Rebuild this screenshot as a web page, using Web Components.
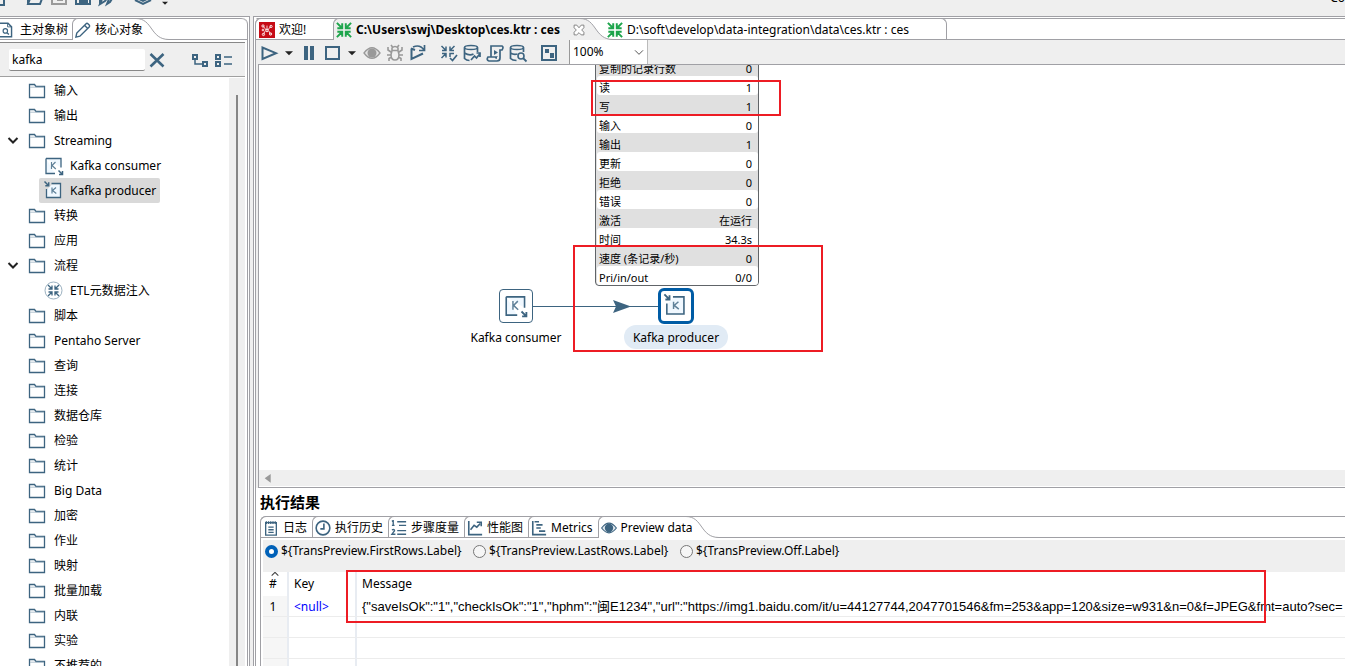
<!DOCTYPE html>
<html lang="zh-CN">
<head>
<meta charset="utf-8">
<title>Spoon - ces</title>
<style>
  html, body { margin: 0; height: 100%; overflow: hidden; }
  body {
    font: 12px/16px "Noto Sans", "Noto Sans CJK SC", sans-serif;
    color: #000;
    background: #efefef;
    --line: #a0a0a5;
    --face: #efefef;
    --ink: #3d6480;
    --mark: #ed1c24;
  }
</style>
</head>
<body>
<spoon-app></spoon-app>
<script>
const define = (name, html, setup) => {
  const template = document.createElement('template');
  template.innerHTML = '<style>*{box-sizing:border-box}:host([hidden]){display:none}</style>' + html;
  customElements.define(name, class extends HTMLElement {
    connectedCallback() {
      if (this.shadowRoot) return;
      const root = this.attachShadow({ mode: 'open' });
      root.append(template.content.cloneNode(true));
      if (setup) setup(this, root);
    }
  });
};

/* ---------- icons ---------- */
const K = (inner) => `<g fill="none" stroke="#3d6480">${inner}</g>`;
const ICONS = {
  file: K('<path stroke-width="2" d="M2 1h10v16H2z"/>'),
  open: K('<path stroke-width="2" d="M2 16V3h5l2 3h6M2 16l3-8h12l-3 8z"/>'),
  saveas: '<g fill="none" stroke="#9a9a9a" stroke-width="2"><path d="M2 2h14v14H2z"/><path d="M7 7h6M7 12h6"/></g>',
  save: K('<path stroke-width="2" d="M2 2h14v14H2z"/><path stroke-width="4" d="M5 13h8M12 12v5"/>'),
  edit: K('<path stroke-width="2" d="M2 16V5h4M2 16l2-5 7-9 3 2-7 9zM9 16l2-5 5-7 1 2-5 8z"/>'),
  layers: K('<path stroke-width="2" d="M1 12l8 4 8-4M1 9l8 4 8-4"/>'),
  folder: '<path d="M1.500 2.500h5l1.500 2h8.500v11h-15z" fill="#fff" stroke="#3d6480" stroke-width="1.300"/><path d="M2 5.200h14" stroke="#9db3c2" stroke-width=".8"/>',
  chevron: '<path d="M4.500 6l4.500 4.500L13.500 6" fill="none" stroke="#222" stroke-width="2"/>',
  consumer: '<path d="M1 1.500h15v9M10 16.500H1v-15" fill="#f0f8ff" stroke="#3d6480" stroke-width="1.300"/><path d="M6.500 5v7M10.500 5L7 8.500l3.800 3.500" fill="none" stroke="#5f8199" stroke-width="1.200"/><path d="M13.500 13.500l4 4M14 17.500h3.500V14" fill="none" stroke="#3d6480" stroke-width="1.500"/>',
  producer: '<path d="M7 2.500h8.500v13h-14V8z" fill="#f0f8ff"/><path d="M6.500 1.500h9v14h-14V7" fill="none" stroke="#3d6480" stroke-width="1.300"/><path d="M7 5.500v6M11 5.500L7.500 8.500l3.800 3" fill="none" stroke="#5f8199" stroke-width="1.200"/><path d="M-.5-.5l4.200 4.200M.3 3.700h3.400V.3" fill="none" stroke="#3d6480" stroke-width="1.500"/>',
  inject: '<circle cx="8.500" cy="8.500" r="8.500" fill="none" stroke="#8fa7b8" stroke-width=".9"/><path d="M3 3l4 4M7 3.500V7H3.500M14 3l-4 4M10 3.500V7h3.500M3 14l4-4M3.500 10H7v3.500M14 14l-4-4M13.500 10H10v3.500" fill="none" stroke="#3d6480" stroke-width="1.300"/>',
  objtree: K('<path stroke-width="1.600" d="M0 1.500h9l4 4v11H0"/><path d="M8.500 1.500v4H13"/><circle cx="6" cy="10" r="2.500" stroke-width="1.300"/><path stroke-width="1.500" d="M8 12l2 2"/>'),
  pencil: K('<path stroke-width="1.600" d="M1 17l1-4.600L12.500 2q1-1 2 0l1.500 1.500q1 1 0 2L5.500 16zM11 4l3.500 3.500"/>'),
  clear: K('<path stroke-width="2.600" d="M2.500 3l13 12.500M15.500 3L2.500 15.500"/>'),
  expand: K('<path stroke-width="2" d="M2 4h4v4H2zM12 11h4v4h-4z"/><path stroke-width="1.500" d="M4 9v4h7"/>'),
  collapse: K('<path stroke-width="2" d="M2 4h4v4H2zM2 11h4v4H2z"/><path stroke-width="1.500" d="M10 6h8M10 13h8"/>'),
  welcome: '<rect x="0" y="0" width="18" height="18" fill="#c60c16"/><g fill="none" stroke="#fff"><path d="M5 5l3 4M13 5l-3 4M7 10l-2 4M11 10l2 4M8 9h2M9 4v4" stroke-width=".9"/><circle cx="4.500" cy="4.500" r="1.300"/><circle cx="13.500" cy="5" r="1.300"/><circle cx="4.500" cy="9" r="1"/><circle cx="5" cy="14" r="1.300"/><circle cx="13" cy="13.500" r="1.300"/><circle cx="9" cy="9.500" r="1.500"/></g>',
  trans: '<g fill="none" stroke="#1ea54c" stroke-width="2.200"><path d="M1 1l6 6M7 1.500V7H1.500M17 1l-6 6M11 1.500V7h5.500M1 17l6-6M1.500 11H7v5.500M17 17l-6-6M16.500 11H11v5.500"/></g>',
  close: '<path d="M3.500 3.500h3L9 6.500l2.500-3h3v3L12 9l2.500 2.500v3h-3L9 12l-2.500 2.500h-3v-3L6 9 3.500 6.500z" fill="#fff" stroke="#777" stroke-width="1"/>',
  play: '<path d="M2.500 3.500v11.500L16 9.200z" fill="none" stroke="#3d6480" stroke-width="2"/>',
  caret: '<path d="M0 5h18L9 14z" fill="#222"/>',
  pause: '<path d="M4 2h4v14H4zM10 2h4v14h-4z" fill="#3d6480"/>',
  stop: K('<path stroke-width="2" d="M3 3h13v12H3z"/>'),
  preview: '<path d="M1 9Q9-1.500 17 9 9 19.500 1 9z" fill="#e5e5e5" stroke="#999" stroke-width="1.300"/><circle cx="9" cy="9" r="4.500" fill="#999"/>',
  bug: '<g fill="none" stroke="#999" stroke-width="1.600"><path d="M6 6.500h6l1 4q0 5.500-4 5.500t-4-5.500zM6 6V4q3-3 6 0v2M5 8L2 6V3M13 8l3-2V3M5 11H1M13 11h4M5.500 13L3 14.500V17M12.500 13l2.500 1.500V17M5 1l1.500 2M13 1l-1.500 2"/></g>',
  replay: K('<path stroke-width="2" d="M2.500 4.500V15L14 9.500M2 4.500l4 1.500"/><path stroke-width="1.700" d="M4 3q7-3 11 3M15.500 1v5.500H10"/>'),
  verify: K('<path stroke-width="1.500" d="M1.500 2L6 6.500M6 2.500v4H2M14.500 2L10 6.500M10 2.500v4h4M1.500 14L6 9.500M2 9.500h4v4M10 13V9.500h4"/><path stroke-width="1.700" d="M10 14l2.500 2.500L17 11"/>'),
  dbimpact: K('<ellipse cx="8" cy="3.500" rx="6.500" ry="2" stroke-width="1.500"/><path stroke-width="1.700" d="M1.500 3.500v11q2 2 5 2M14.500 3.500V8M1.500 9q5 3 9 1"/><path stroke-width="1.700" d="M8 16l3.500-4 2 2 4-5M13.500 9H17v4"/>'),
  sql: K('<path stroke-width="1.700" d="M5 2h11q2 1 0 4h-2v8q0 3-3 3H3q-3-1-1-4h3zM11 14q-2 0-1-1H5"/><path fill="#3d6480" stroke="none" d="M8 6v5l4-2.500z"/>'),
  dbsearch: K('<ellipse cx="8" cy="3.500" rx="6.500" ry="2" stroke-width="1.500"/><path stroke-width="1.700" d="M1.500 3.500v11q2 2 6 2M14.500 3.500V8M1.500 9q3 2 7 1"/><circle cx="12" cy="12" r="3" stroke-width="1.600"/><path stroke-width="1.800" d="M14 14l3.500 3.500"/>'),
  grid: K('<path stroke-width="2" d="M2 2h14v14H2z"/>') + '<path d="M5 5h4v4H5zM10 9h4v5h-4z" fill="#3d6480"/>',
  log: K('<path stroke-width="1.500" d="M3 3h12v14H3zM6 8h6M6 11h6M6 14h6"/><path stroke-width="3" stroke-dasharray="1.500 1" d="M3 3h12"/>'),
  clock: K('<circle cx="9" cy="9" r="7.700" stroke-width="1.800"/><path stroke-width="1.800" d="M10 4v6H6"/>'),
  steps: K('<path stroke-width="1.500" d="M7 2h10M9 6h8M7 12h10M7 16h10M2.500 0v6M1 1.500L2.500.5M1 6h3M1 11q3-1 3 1l-3 4h4"/>'),
  chart: K('<path stroke-width="1.800" d="M2 1v15.500h15M4 11l4-5 3 2 4-4"/><path stroke-width="1.800" d="M11 2.500h5V7"/>'),
  metrics: K('<path stroke-width="1.800" d="M2 1v15.500h15M4 2h5M6 5.500h7M6 9h5M9 12.500h7"/>'),
  eye: '<path d="M.7 9Q9-2 17.300 9 9 20 .7 9z" fill="#dfe8ee" stroke="#3d6480" stroke-width="1.300"/><circle cx="9" cy="9" r="4.700" fill="#3d6480"/>',
  down: '<path d="M3 6.500l6 6 6-6" fill="none" stroke="#555" stroke-width="1.500"/>',
  left: '<path d="M13 3v13L4 9.500z" fill="#999"/>',
  sortup: '<path d="M3 12l6-6 6 6" fill="none" stroke="#444" stroke-width="2"/>'
};
define('ui-icon', `<style>
  :host { display: block; flex: none; width: var(--size, 18px); height: var(--size, 18px); }
  svg { display: block; width: 100%; height: 100%; overflow: visible; }
</style><svg viewBox="0 0 18 18" aria-hidden="true"></svg>`,
(host, root) => { root.querySelector('svg').innerHTML = ICONS[host.getAttribute('name')]; });

/* ---------- tabs ---------- */
define('tab-strip', `<style>
  :host { display: flex; height: 22px; background: #fff; border-top: 1px solid var(--line);
    box-shadow: inset 0 -1px var(--line); border-left: var(--strip-left, 1px solid var(--line)); border-top-left-radius: 6px; }
</style><slot></slot>`);

define('ui-tab', `<style>
  :host { display: flex; flex: none; position: relative; }
  button { display: flex; align-items: center; gap: 4px; width: 100%; height: 22px; margin: -1px 0 0; padding: 0 5px 0 2px;
    font: inherit; color: inherit; white-space: nowrap; text-align: left; background: none; border: 0;
    border-top: 1px solid var(--line); border-left: 1px solid var(--line); border-top-left-radius: 6px; --size: 16px; }
  :host([plain]) button { border-left-color: transparent; border-radius: 0; }
  :host([flush]) button { border-left: 0; padding: 0 4px 0 0; border-radius: 0; }
  :host([last]) button { border-right: 1px solid var(--line); border-radius: 0 6px 0 0; }
  :host([bold]) button { font-weight: bold; }
  :host([selected]) button { background: var(--tab-face, #fff); padding-right: 0; }
  svg { display: none; flex: none; width: 33px; height: 21px; margin-left: -7px; }
  :host([selected]) svg { display: block; }
  span, .x { position: relative; z-index: 1; }
  .x { margin-left: auto; }
</style>
<button role="tab"><ui-icon></ui-icon><span><slot></slot></span></button>
<svg viewBox="0 0 33 21" aria-hidden="true"><path d="M0 0C17 0 14 20.500 33 20.500V21H0z" fill="var(--tab-face,#fff)"/><path d="M0 -.5C17 -.5 14 20.500 33 20.500" fill="none" stroke="#a0a0a5"/></svg>`,
(host, root) => {
  const icon = root.querySelector('ui-icon'), fresh = document.createElement('ui-icon');
  fresh.setAttribute('name', host.getAttribute('icon'));
  icon.replaceWith(fresh);
  const button = root.querySelector('button');
  button.setAttribute('aria-selected', host.hasAttribute('selected'));
  if (host.hasAttribute('closable')) {
    const x = document.createElement('ui-icon');
    x.setAttribute('name', 'close'); x.className = 'x';
    button.append(x);
  }
});

/* ---------- main toolbar ---------- */
define('main-toolbar', `<style>
  :host { display: flex; align-items: flex-end; gap: 6px; height: 16px; padding: 0 0 10px; overflow: hidden; background: var(--face); }
  button { flex: none; padding: 0; border: 0; background: none; }
  .file { margin-left: -8px; } .open { margin-left: 10px; } .layers { margin-left: 12px; }
  .drop { --size: 6px; margin-left: 4px; }
  .connect { margin-left: auto; font: inherit; line-height: 16px; }
</style>
<button class="file" aria-label="新建"><ui-icon name="file"></ui-icon></button>
<button class="open" aria-label="打开"><ui-icon name="open"></ui-icon></button>
<button aria-label="浏览"><ui-icon name="saveas"></ui-icon></button>
<button aria-label="保存"><ui-icon name="save"></ui-icon></button>
<button aria-label="另存为"><ui-icon name="edit"></ui-icon></button>
<button class="layers" aria-label="透视图"><ui-icon name="layers"></ui-icon></button>
<button class="drop" aria-label="更多"><ui-icon name="caret"></ui-icon></button>
<button class="connect">Co</button>`);

/* ---------- object explorer ---------- */
define('tree-item', `<style>
  :host { display: flex; align-items: center; height: 25px; padding-left: 4px; white-space: nowrap; }
  .arrow { width: 18px; margin-right: 6px; }
  .row { display: flex; align-items: center; gap: 8px; height: 25px; padding: 0 4px 0 0; border-radius: 2px; }
  :host([child]) .row { margin-left: 11px; gap: 7px; padding-left: 6px; }
  :host([selected]) .row { background: #d9d9d9; }
</style><span class="arrow"></span><span class="row"><slot></slot></span>`,
(host, root) => {
  const icon = document.createElement('ui-icon');
  icon.setAttribute('name', host.getAttribute('icon') || 'folder');
  root.querySelector('.row').prepend(icon);
  host.setAttribute('role', 'treeitem');
  if (host.hasAttribute('open')) {
    const arrow = document.createElement('ui-icon');
    arrow.setAttribute('name', 'chevron');
    root.querySelector('.arrow').append(arrow);
  }
});

define('object-explorer', `<style>
  :host { display: flex; flex-direction: column; flex: none; width: 250px; background: #fff; padding-top: 1px;
    border-top: 1px solid var(--line); border-right: 1px solid var(--line); --strip-left: 0; min-height: 0; }
  .inner { display: flex; flex-direction: column; flex: 1; min-height: 0; margin-right: 1px; border-right: 1px solid var(--line); border-top-right-radius: 6px; padding-right: 2px; }
  tab-strip { border-radius: 0 6px 0 0; margin-right: -2px; }
  .search { display: flex; align-items: center; flex: none; height: 35px; margin-top: 2px; padding: 0 13px 0 9px; background: var(--face);
    border-top: 1px solid #888; border-bottom: 1px solid #a0a0a0; }
  input { width: 136px; height: 22px; padding: 0 3px; font: inherit; border: 0; border-bottom: 1px solid #888; border-radius: 2px; background: #fff; outline: 0; }
  button { padding: 0; border: 0; background: none; }
  .clear { margin: 0 auto 0 3px; } .collapse { margin-left: 5px; }
  .body { display: flex; flex: 1; min-height: 0; overflow: hidden; padding-top: 1px; }
  .tree { flex: 1; }
  .bar { width: 16px; padding: 17px 0 0 7px; background: var(--face); }
  .thumb { width: 2px; height: 100%; background: #868686; }
</style>
<div class="inner">
<tab-strip role="tablist"><ui-tab icon="objtree" flush>主对象树</ui-tab><ui-tab icon="pencil" selected>核心对象</ui-tab></tab-strip>
<div class="search">
  <input type="text" value="kafka" aria-label="步骤">
  <button class="clear" aria-label="清除"><ui-icon name="clear"></ui-icon></button>
  <button aria-label="展开全部"><ui-icon name="expand"></ui-icon></button>
  <button class="collapse" aria-label="收起全部"><ui-icon name="collapse"></ui-icon></button>
</div>
<div class="body">
  <div class="tree" role="tree">
    <tree-item>输入</tree-item><tree-item>输出</tree-item>
    <tree-item open>Streaming</tree-item>
    <tree-item child icon="consumer">Kafka consumer</tree-item>
    <tree-item child selected icon="producer">Kafka producer</tree-item>
    <tree-item>转换</tree-item><tree-item>应用</tree-item>
    <tree-item open>流程</tree-item>
    <tree-item child icon="inject">ETL元数据注入</tree-item>
    <tree-item>脚本</tree-item><tree-item>Pentaho Server</tree-item><tree-item>查询</tree-item>
    <tree-item>连接</tree-item><tree-item>数据仓库</tree-item><tree-item>检验</tree-item>
    <tree-item>统计</tree-item><tree-item>Big Data</tree-item><tree-item>加密</tree-item>
    <tree-item>作业</tree-item><tree-item>映射</tree-item><tree-item>批量加载</tree-item>
    <tree-item>内联</tree-item><tree-item>实验</tree-item><tree-item>不推荐的</tree-item>
  </div>
  <div class="bar"><div class="thumb"></div></div>
</div>
</div>`);

/* ---------- transformation toolbar ---------- */
define('trans-toolbar', `<style>
  :host { display: flex; align-items: center; flex: none; height: 24px; gap: 13px; padding-left: 4px; background: var(--face); }
  .group { display: flex; align-items: center; gap: 5px; padding-top: 2px; }
  button { padding: 0; border: 0; background: none; }
  .drop { --size: 8px; margin: 0 2px; }
  .zoom { display: grid; align-items: center; width: 79px; height: 24px; --size: 12px; margin-left: -2px; }
  select, .zoom ui-icon { grid-area: 1 / 1; }
  select { appearance: none; width: 100%; height: 24px; padding: 0 3px; font: inherit; color: inherit; background: #fff; border: 0; border-left: 1px solid #999; border-right: 1px solid #bbb; }
  .zoom ui-icon { justify-self: end; margin-right: 3px; pointer-events: none; }
</style>
<div class="group">
  <button aria-label="运行"><ui-icon name="play"></ui-icon></button>
  <button class="drop" aria-label="运行选项"><ui-icon name="caret"></ui-icon></button>
  <button aria-label="暂停"><ui-icon name="pause"></ui-icon></button>
  <button aria-label="停止"><ui-icon name="stop"></ui-icon></button>
  <button class="drop" aria-label="停止选项"><ui-icon name="caret"></ui-icon></button>
  <button aria-label="预览"><ui-icon name="preview"></ui-icon></button>
  <button aria-label="调试"><ui-icon name="bug"></ui-icon></button>
  <button aria-label="重放"><ui-icon name="replay"></ui-icon></button>
</div>
<div class="group">
  <button aria-label="校验"><ui-icon name="verify"></ui-icon></button>
  <button aria-label="影响分析"><ui-icon name="dbimpact"></ui-icon></button>
  <button aria-label="SQL"><ui-icon name="sql"></ui-icon></button>
  <button aria-label="浏览数据库"><ui-icon name="dbsearch"></ui-icon></button>
</div>
<div class="group"><button aria-label="显示结果"><ui-icon name="grid"></ui-icon></button></div>
<div class="zoom"><select aria-label="缩放"><option>100%</option></select><ui-icon name="down"></ui-icon></div>`);

/* ---------- canvas ---------- */
define('red-frame', `<style>:host { display: block; position: absolute; border: 2px solid var(--mark); pointer-events: none; box-sizing: border-box; }</style>`);

define('step-metrics', `<style>
  :host { display: block; border: 1px solid #606468; border-radius: 4px; background: #e0e0e0; padding-left: 1px; box-sizing: border-box; }
  table { width: 100%; border-spacing: 0; font-size: 11px; line-height: 14px; }
  th, td { height: 19px; padding: 5px 6px 0 2px; font-weight: normal; text-align: left; white-space: nowrap; }
  th { padding-right: 0; }
  td { text-align: right; }
  tr:nth-child(even) > * { background: #fff; }
  tr:nth-child(even) th { border-radius: 3px 0 0 3px; }
  tr:nth-child(even) td { border-radius: 0 3px 3px 0; }
</style>
<table><tbody>
<tr><th scope="row">复制的记录行数</th><td>0</td></tr>
<tr><th scope="row">读</th><td>1</td></tr>
<tr><th scope="row">写</th><td>1</td></tr>
<tr><th scope="row">输入</th><td>0</td></tr>
<tr><th scope="row">输出</th><td>1</td></tr>
<tr><th scope="row">更新</th><td>0</td></tr>
<tr><th scope="row">拒绝</th><td>0</td></tr>
<tr><th scope="row">错误</th><td>0</td></tr>
<tr><th scope="row">激活</th><td>在运行</td></tr>
<tr><th scope="row">时间</th><td>34.3s</td></tr>
<tr><th scope="row">速度 (条记录/秒)</th><td>0</td></tr>
<tr><th scope="row">Pri/in/out</th><td>0/0</td></tr>
</tbody></table>`);

define('step-node', `<style>
  :host { display: flex; flex-direction: column; align-items: center; width: 106px; }
  .box { display: grid; place-items: center; width: 36px; height: 36px; margin-bottom: 1px; --size: 22px; }
  .face { display: grid; place-items: center; width: 34px; height: 34px; border: 1px solid var(--ink); border-radius: 4px; background: #fff; }
  :host([selected]) .face { width: 36px; height: 36px; border: 3px solid #005ca5; border-radius: 6px; }
  .label { height: 24px; padding: 0 9px; line-height: 26px; border-radius: 12px; white-space: nowrap; }
  :host([selected]) .label { background: #e1ebf5; }
</style>
<div class="box"><div class="face"></div></div><div class="label"><slot></slot></div>`,
(host, root) => {
  const icon = document.createElement('ui-icon');
  icon.setAttribute('name', host.getAttribute('icon'));
  root.querySelector('.face').append(icon);
});

define('trans-canvas', `<style>
  :host { display: flex; flex-direction: column; flex: 1; min-height: 0; margin-left: 2px; background: #fff;
    border: 1px solid var(--line); border-right: 0; }
  .sheet { position: relative; flex: 1; min-height: 0; overflow: hidden; }
  .sheet > * { position: absolute; }
  step-metrics { left: 336px; top: -9px; width: 164px; }
  .in { left: 204px; top: 223px; } .out { left: 364px; top: 223px; }
  svg { left: 274px; top: 230px; width: 126px; height: 22px; }
  .rows { left: 332px; top: 15px; width: 190px; height: 36px; }
  .speed { left: 314px; top: 180px; width: 250px; height: 107px; }
  .scroll { display: flex; align-items: center; height: 16px; margin-bottom: 1px; padding-left: 3px; background: var(--face); --size: 12px; }
</style>
<div class="sheet">
  <svg viewBox="0 0 126 22" aria-hidden="true"><path d="M0 11.500h126" stroke="#3d6480"/><path d="M80 5l18 6.500L80 18l3-6.500z" fill="#3d6480"/></svg>
  <step-metrics></step-metrics>
  <step-node class="in" icon="consumer">Kafka consumer</step-node>
  <step-node class="out" icon="producer" selected>Kafka producer</step-node>
  <red-frame class="rows"></red-frame>
  <red-frame class="speed"></red-frame>
</div>
<div class="scroll"><ui-icon name="left"></ui-icon></div>`);

/* ---------- results ---------- */
define('preview-table', `<style>
  :host { display: block; position: relative; overflow: hidden; flex: 1; background: #fff; }
  table { width: 100%; table-layout: fixed; border-spacing: 0; }
  th, td { padding: 0 0 0 5px; font-weight: normal; text-align: left; white-space: nowrap; }
  th { height: 24px; }
  td { height: 21px; padding-top: 2px; border-bottom: 1px solid #ececec; }
  tr > :nth-child(1), tr > :nth-child(2) { border-right: 2px solid #e8ecf2; }
  tr > :nth-child(1) { width: 26px; padding-left: 0; padding-right: 4px; text-align: center; }
  tr > :nth-child(2) { width: 68px; }
  td:nth-child(1) { background: #f6f6f6; }
  td:nth-child(2) { color: #00f; }
  td:nth-child(3) { font: 13px/16px "Liberation Sans", "Noto Sans CJK SC", sans-serif; }
  th:first-child ui-icon { position: absolute; left: 7px; top: -3px; --size: 10px; }
</style>
<table>
<thead><tr><th scope="col"><ui-icon name="sortup"></ui-icon>#</th><th scope="col">Key</th><th scope="col">Message</th></tr></thead>
<tbody>
<tr><td>1</td><td>&lt;null&gt;</td><td>{"saveIsOk":"1","checkIsOk":"1","hphm":"闽E1234","url":"https://img1.baidu.com/it/u=44127744,2047701546&amp;fm=253&amp;app=120&amp;size=w931&amp;n=0&amp;f=JPEG&amp;fmt=auto?sec=</td></tr>
<tr><td></td><td></td><td></td></tr>
<tr><td></td><td></td><td></td></tr>
<tr><td></td><td></td><td></td></tr>
</tbody>
</table>`);

define('results-pane', `<style>
  :host { display: flex; flex-direction: column; flex: none; height: 178px; padding-left: 4px; background: #fff; }
  h2 { margin: 4px 0; font-size: 15px; line-height: 20px; }
  .page { position: relative; display: flex; flex-direction: column; flex: 1; min-height: 0; border-left: 1px solid var(--line); padding: 2px 0 0 2px; }
  tab-strip { --strip-left: 0; }
  .modes { display: flex; flex: none; height: 32px; gap: 9px; padding: 2px 0 0 2px; background: var(--face); }
  label { display: flex; align-items: center; gap: 3px; height: 18px; white-space: nowrap; }
  .modes label:first-child { min-width: 199px; } .modes label:nth-child(2) { min-width: 198px; }
  input { appearance: none; flex: none; width: 13px; height: 13px; margin: 0; border: 1px solid #777; border-radius: 50%; background: #f6f6f6; }
  input:checked { border: 4px solid #0061b8; background: #fff; }
  red-frame { left: 85px; top: 32px; width: 920px; height: 53px; }
</style>
<h2>执行结果</h2>
<tab-strip role="tablist"><ui-tab icon="log">日志</ui-tab><ui-tab icon="clock">执行历史</ui-tab><ui-tab icon="steps">步骤度量</ui-tab><ui-tab icon="chart">性能图</ui-tab><ui-tab icon="metrics">Metrics</ui-tab><ui-tab icon="eye" selected>Preview data</ui-tab></tab-strip>
<div class="page">
  <div class="modes">
    <label><input type="radio" name="rows" checked>\${TransPreview.FirstRows.Label}</label>
    <label><input type="radio" name="rows">\${TransPreview.LastRows.Label}</label>
    <label><input type="radio" name="rows">\${TransPreview.Off.Label}</label>
  </div>
  <preview-table></preview-table>
  <red-frame></red-frame>
</div>`);

define('editor-area', `<style>
  :host { display: flex; flex-direction: column; flex: 1; min-width: 0; min-height: 0; background: #fff;
    border-top: 1px solid var(--line); border-left: 1px solid var(--line); padding: 1px 0 0 1px; }
  .inner { display: flex; flex-direction: column; flex: 1; min-height: 0; border-left: 1px solid var(--line); border-top-left-radius: 6px; }
  .top { display: flex; flex-direction: column; flex: 1; min-height: 0; background: var(--face); }
  tab-strip { --tab-face: var(--face); margin-left: -1px; }
  .welcome { width: 77px; } .active { width: 280px; } .other { width: 343px; margin-left: -9px; }
</style>
<div class="inner">
<tab-strip role="tablist"><ui-tab class="welcome" icon="welcome" plain>欢迎!</ui-tab><ui-tab class="active" icon="trans" selected bold closable>C:\\Users\\swj\\Desktop\\ces.ktr : ces</ui-tab><ui-tab class="other" icon="trans" plain last>D:\\soft\\develop\\data-integration\\data\\ces.ktr : ces</ui-tab></tab-strip>
<div class="top"><trans-toolbar></trans-toolbar><trans-canvas></trans-canvas></div>
<results-pane></results-pane>
</div>`);

define('spoon-app', `<style>
  :host { display: flex; flex-direction: column; height: 100vh; overflow: hidden; }
  .split { display: flex; flex: 1; gap: 3px; min-height: 0; }
</style>
<main-toolbar></main-toolbar>
<div class="split"><object-explorer></object-explorer><editor-area></editor-area></div>`);
</script>
</body>
</html>
